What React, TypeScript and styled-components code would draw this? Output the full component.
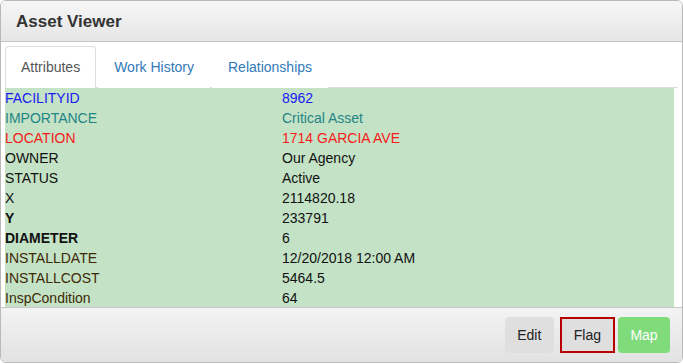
import React from "react";
import styled, { createGlobalStyle } from "styled-components";

const Global = createGlobalStyle`
  html, body { margin: 0; padding: 0; background: #fff; }
  body { font-family: "Liberation Sans", Arial, sans-serif; font-size: 14px; color: #333; }
  * { box-sizing: border-box; }
`;

const Panel = styled.div`
  width: 683px;
  height: 363px;
  border: 1px solid #b9b9b9;
  border-radius: 6px;
  overflow: hidden;
  display: flex;
  flex-direction: column;
  background: #fff;
`;

const Header = styled.div`
  height: 41px;
  flex: none;
  display: flex;
  align-items: center;
  padding: 0 15px;
  background: linear-gradient(to bottom, #f6f6f6, #e6e6e6);
  border-bottom: 1px solid #c4c4c4;
`;

const Title = styled.h1`
  margin: 0;
  font-size: 17px;
  font-weight: bold;
  color: #333;
  padding-top: 1px;
`;

const Body = styled.div`
  flex: 1;
  display: flex;
  flex-direction: column;
  padding: 4px 4px 0 4px;
  min-height: 0;
`;

const Tabs = styled.ul`
  display: flex;
  list-style: none;
  margin: 0;
  padding: 0;
  border-bottom: 1px solid #ddd;
`;

const Tab = styled.li<{ $active?: boolean }>`
  margin-right: 2px;
  margin-bottom: -1px;
  padding: 10px 15px;
  line-height: 20px;
  font-size: 14px;
  border: 1px solid ${(p) => (p.$active ? "#ddd" : "transparent")};
  border-bottom-color: ${(p) => (p.$active ? "#fff" : "transparent")};
  border-radius: 4px 4px 0 0;
  background: #fff;
  color: ${(p) => (p.$active ? "#555" : "#337ab7")};
  cursor: pointer;
`;

const Table = styled.div`
  display: grid;
  grid-template-columns: 277px 1fr;
  background: #c4e2c5;
  margin-right: 4px;
  flex: 1;
  align-content: start;
`;

const Cell = styled.div<{ $color?: string; $bold?: boolean }>`
  height: 20px;
  line-height: 20px;
  font-size: 14px;
  white-space: nowrap;
  color: ${(p) => p.$color || "#111"};
  font-weight: ${(p) => (p.$bold ? "bold" : "normal")};
`;

const Footer = styled.div`
  height: 55px;
  flex: none;
  display: flex;
  justify-content: flex-end;
  align-items: center;
  padding: 0 12px 1px 0;
  border-top: 1px solid #c8c8c8;
  background: linear-gradient(to bottom, #f3f3f3, #e2e2e2);
`;

const Button = styled.button<{ $variant?: "flag" | "map" }>`
  height: 36px;
  padding: 0 12px;
  font-family: "Liberation Sans", Arial, sans-serif;
  font-size: 14px;
  border-radius: ${(p) => (p.$variant === "flag" ? "0" : "4px")};
  border: ${(p) => (p.$variant === "flag" ? "2px solid #b70000" : "none")};
  background: ${(p) => (p.$variant === "map" ? "#80dc7b" : "#dfdfdf")};
  color: ${(p) => (p.$variant === "map" ? "#fff" : "#222")};
  margin-left: ${(p) => (p.$variant === "flag" ? "6px" : p.$variant === "map" ? "3px" : "0")};
  min-width: ${(p) => (p.$variant === "flag" ? "54px" : p.$variant === "map" ? "52px" : "49px")};
`;

type Row = { label: string; value: string; color?: string; bold?: boolean; labelColor?: string };

const rows: Row[] = [
  { label: "FACILITYID", value: "8962", color: "#1b1bf5" },
  { label: "IMPORTANCE", value: "Critical Asset", color: "#1f8585" },
  { label: "LOCATION", value: "1714 GARCIA AVE", color: "#f51b1b" },
  { label: "OWNER", value: "Our Agency" },
  { label: "STATUS", value: "Active" },
  { label: "X", value: "2114820.18" },
  { label: "Y", value: "233791", bold: true },
  { label: "DIAMETER", value: "6", bold: true },
  { label: "INSTALLDATE", value: "12/20/2018 12:00 AM", labelColor: "#3d2a05" },
  { label: "INSTALLCOST", value: "5464.5", labelColor: "#3d2a05" },
  { label: "InspCondition", value: "64", labelColor: "#3d2a05" },
];

export default function App() {
  return (
    <>
      <Global />
      <Panel>
        <Header>
          <Title>Asset Viewer</Title>
        </Header>
        <Body>
          <Tabs>
            <Tab $active>Attributes</Tab>
            <Tab>Work History</Tab>
            <Tab>Relationships</Tab>
          </Tabs>
          <Table>
            {rows.map((r) => (
              <React.Fragment key={r.label}>
                <Cell $color={r.color || r.labelColor} $bold={r.bold}>
                  {r.label}
                </Cell>
                <Cell $color={r.color}>{r.value}</Cell>
              </React.Fragment>
            ))}
          </Table>
        </Body>
        <Footer>
          <Button>Edit</Button>
          <Button $variant="flag">Flag</Button>
          <Button $variant="map">Map</Button>
        </Footer>
      </Panel>
    </>
  );
}
